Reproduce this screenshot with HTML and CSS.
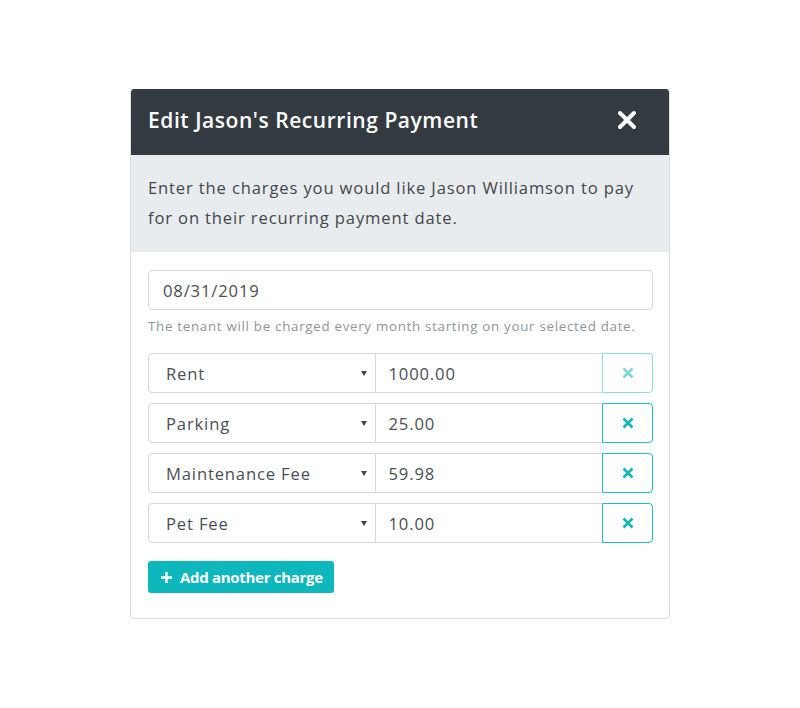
FILE: index.html
```html
<!DOCTYPE html>
<html>
<head>
<meta charset="utf-8">
<link rel="stylesheet" href="styles.css">
</head>
<body>
<div class="modal">
  <div class="modal-header">
    <h1 class="title">Edit Jason's Recurring Payment</h1>
    <span class="close">
      <svg width="20" height="20" viewBox="0 0 20 20"><path d="M3 3L17 17M17 3L3 17" stroke="#fff" stroke-width="4" stroke-linecap="round"/></svg>
    </span>
  </div>
  <div class="intro">Enter the charges you would like Jason Williamson to pay for on their recurring payment date.</div>
  <div class="modal-body">
    <div class="field">08/31/2019</div>
    <p class="help">The tenant will be charged every month starting on your selected date.</p>
    <div class="rows">
      <div class="row">
        <div class="select"><span>Rent</span><span class="caret"></span></div>
        <div class="amount">1000.00</div>
        <div class="del disabled"><svg width="12" height="12" viewBox="0 0 12 12"><path d="M1.5 1.5L10.5 10.5M10.5 1.5L1.5 10.5" stroke="currentColor" stroke-width="2.6"/></svg></div>
      </div>
      <div class="row">
        <div class="select"><span>Parking</span><span class="caret"></span></div>
        <div class="amount">25.00</div>
        <div class="del"><svg width="12" height="12" viewBox="0 0 12 12"><path d="M1.5 1.5L10.5 10.5M10.5 1.5L1.5 10.5" stroke="currentColor" stroke-width="2.6"/></svg></div>
      </div>
      <div class="row">
        <div class="select"><span>Maintenance Fee</span><span class="caret"></span></div>
        <div class="amount">59.98</div>
        <div class="del"><svg width="12" height="12" viewBox="0 0 12 12"><path d="M1.5 1.5L10.5 10.5M10.5 1.5L1.5 10.5" stroke="currentColor" stroke-width="2.6"/></svg></div>
      </div>
      <div class="row">
        <div class="select"><span>Pet Fee</span><span class="caret"></span></div>
        <div class="amount">10.00</div>
        <div class="del"><svg width="12" height="12" viewBox="0 0 12 12"><path d="M1.5 1.5L10.5 10.5M10.5 1.5L1.5 10.5" stroke="currentColor" stroke-width="2.6"/></svg></div>
      </div>
    </div>
    <button class="add"><svg width="13" height="13" viewBox="0 0 13 13"><path d="M6.5 1V12M1 6.5H12" stroke="#fff" stroke-width="2.4"/></svg>Add another charge</button>
  </div>
</div>
</body>
</html>
```

FILE: styles.css
```css
html, body {
  margin: 0;
  padding: 0;
  background: #fff;
}
body {
  padding-top: 89px;
  font-family: "Open Sans", "Liberation Sans", sans-serif;
  color: #4a4f55;
}
.modal {
  width: 540px;
  margin: 0 auto;
  border: 1px solid #dcdfe2;
  border-top: none;
  border-radius: 4px;
  overflow: hidden;
  box-sizing: border-box;
}
.modal-header {
  height: 66px;
  background: #343a41;
  display: flex;
  align-items: center;
  justify-content: space-between;
  padding: 0 32px 0 17px;
}
.title {
  margin: 0;
  color: #fff;
  font-size: 21px;
  font-weight: 600;
  letter-spacing: 0.55px;
  position: relative;
  top: -2px;
}
.close {
  display: flex;
  position: relative;
  top: -2px;
}
.intro {
  background: #e9ecef;
  padding: 18px 17px 19px;
  font-size: 16.6px;
  line-height: 30px;
  letter-spacing: 0.85px;
  color: #43474c;
}
.modal-body {
  padding: 18px 16px 25px 17px;
}
.field {
  height: 40px;
  box-sizing: border-box;
  border: 1px solid #d5d9dd;
  border-radius: 4px;
  padding: 0 14px;
  display: flex;
  align-items: center;
  font-size: 16.6px;
  letter-spacing: 0.85px;
  color: #4a4f55;
}
.help {
  margin: 6px 0 0;
  height: 37px;
  font-size: 13.3px;
  line-height: 20px;
  letter-spacing: 0.72px;
  color: #8f959b;
}
.rows {
  display: flex;
  flex-direction: column;
  gap: 10px;
}
.row {
  display: flex;
  height: 40px;
}
.select, .amount {
  flex: 1;
  box-sizing: border-box;
  border: 1px solid #d5d9dd;
  display: flex;
  align-items: center;
  font-size: 16.6px;
  letter-spacing: 0.85px;
  color: #4a4f55;
}
.select {
  border-radius: 4px 0 0 4px;
  padding: 0 8px 0 17px;
  justify-content: space-between;
}
.caret {
  width: 0;
  height: 0;
  border-left: 3.5px solid transparent;
  border-right: 3.5px solid transparent;
  border-top: 5px solid #444;
}
.amount {
  border-left: 1px solid #d5d9dd;
  border-right: none;
  margin-left: -1px;
  padding: 0 13px;
}
.del {
  width: 51px;
  box-sizing: border-box;
  border: 1px solid #1fbcc0;
  border-radius: 0 4px 4px 0;
  display: flex;
  align-items: center;
  justify-content: center;
  color: #12b6ba;
}
.del.disabled {
  border-color: #8fdcde;
  color: #7fd6d8;
}
.add {
  margin-top: 18px;
  height: 32px;
  padding: 0 11px 0 12px;
  border: none;
  border-radius: 3px;
  background: #0db7bb;
  color: #fff;
  font-family: "Open Sans", "Liberation Sans", sans-serif;
  font-size: 15px;
  font-weight: 700;
  letter-spacing: -0.3px;
  display: flex;
  align-items: center;
  gap: 7px;
}
```
